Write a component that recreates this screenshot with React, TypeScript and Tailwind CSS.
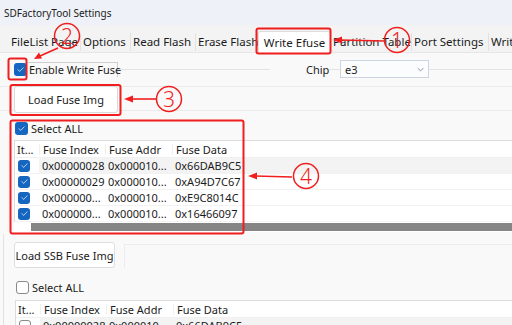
import React from "react";

const tabs = [
  { name: "FileList Page", w: "w-[72px]" },
  { name: "Options", w: "w-[50px]" },
  { name: "Read Flash", w: "w-[65px]" },
  { name: "Erase Flash", w: "w-[62px]" },
  { name: "Write Efuse", w: "w-[73px]", active: true },
  { name: "Partition Table", w: "w-[81px]" },
  { name: "Port Settings", w: "w-[77px]" },
  { name: "Write", w: "w-[60px]" },
];

const fuseRows = [
  ["0x00000028", "0x000010...", "0x66DAB9C5"],
  ["0x00000029", "0x000010...", "0xA94D7C67"],
  ["0x000000...", "0x000010...", "0xE9C8014C"],
  ["0x000000...", "0x000010...", "0x16466097"],
];

function Check({ checked, small }: { checked: boolean; small?: boolean }) {
  const size = small ? "w-[12px] h-[12px]" : "w-[13px] h-[13px]";
  if (!checked) {
    return <span className={`${size} shrink-0 rounded-[3px] border border-[#8a8a8a] bg-white`} />;
  }
  return (
    <span className={`${size} shrink-0 rounded-[3px] bg-[#1466c0] flex items-center justify-center`}>
      <svg viewBox="0 0 12 12" className="w-[9px] h-[9px]">
        <path d="M2.5 6.3 L5 8.5 L9.5 3.8" fill="none" stroke="#dbe8f7" strokeWidth="1.1" strokeLinecap="round" strokeLinejoin="round" />
      </svg>
    </span>
  );
}

function FuseTable({ checked, rows }: { checked: boolean; rows: string[][] }) {
  return (
    <div className="bg-white border-t border-l border-[#dcdcdc] whitespace-nowrap">
      <div className="grid grid-cols-[24px_66px_67px_1fr] h-[17px] items-center border-b border-[#f0f0f0]">
        <span className="pl-[2px]">It...</span>
        <span className="pl-[3px] border-l border-[#f0f0f0]">Fuse Index</span>
        <span className="pl-[3px] border-l border-[#f0f0f0]">Fuse Addr</span>
        <span className="pl-[3px] border-l border-[#f0f0f0]">Fuse Data</span>
      </div>
      {rows.map((r, i) => (
        <div
          key={i}
          className={`grid grid-cols-[24px_66px_67px_1fr] h-[16px] items-center border-b border-[#f2f2f2] ${i === 0 ? "bg-[#f3f3f3]" : ""}`}
        >
          <span className="pl-[3px] h-full flex items-center bg-white">
            <Check checked={checked} small />
          </span>
          <span className="pl-[3px]">{r[0]}</span>
          <span className="pl-[3px]">{r[1]}</span>
          <span className="pl-[3px]">{r[2]}</span>
        </div>
      ))}
    </div>
  );
}

function Annotations() {
  const red = "#f01e1e";
  return (
    <svg className="absolute inset-0 pointer-events-none" width="512" height="325" viewBox="0 0 512 325">
      {/* boxes */}
      <rect x="256.5" y="28.5" width="74" height="25" rx="2" fill="none" stroke={red} strokeWidth="2" />
      <rect x="8.5" y="58.5" width="18" height="21" rx="2" fill="none" stroke={red} strokeWidth="2" />
      <rect x="10.5" y="85" width="110" height="30" rx="2" fill="none" stroke={red} strokeWidth="2" />
      <rect x="10.5" y="120.5" width="233" height="113" rx="2" fill="none" stroke={red} strokeWidth="2" />
      {/* arrows */}
      <line x1="385" y1="41" x2="340" y2="40" stroke={red} strokeWidth="1.6" />
      <polygon points="333,40 342,36.5 342,43.5" fill={red} />
      <line x1="58" y1="48" x2="40" y2="56" stroke={red} strokeWidth="1.6" />
      <polygon points="34,59 39,52.5 42,58.5" fill={red} />
      <line x1="156" y1="99" x2="131" y2="99" stroke={red} strokeWidth="1.6" />
      <polygon points="124,99 133,95.5 133,102.5" fill={red} />
      <line x1="292" y1="177" x2="255" y2="176" stroke={red} strokeWidth="1.6" />
      <polygon points="248,176 257,172.5 257,179.5" fill={red} />
      {/* circled numbers */}
      {[
        { cx: 397, cy: 40, n: "1" },
        { cx: 67, cy: 36, n: "2" },
        { cx: 169, cy: 99, n: "3" },
        { cx: 306, cy: 176, n: "4" },
      ].map((c) => (
        <g key={c.n}>
          <circle cx={c.cx} cy={c.cy} r="12.5" fill="none" stroke={red} strokeWidth="1.5" />
          <text
            x={c.cx}
            y={c.cy + 7.5}
            textAnchor="middle"
            fill={red}
            fontSize="21"
            fontWeight="300"
            fontFamily="'Noto Sans', sans-serif"
          >
            {c.n}
          </text>
        </g>
      ))}
    </svg>
  );
}

export default function App() {
  return (
    <div
      className="relative w-[512px] h-[325px] overflow-hidden bg-[#f9f9f9] text-[11px] leading-none text-[#1b1b1b]"
      style={{ fontFamily: "'Noto Sans', 'Open Sans', sans-serif" }}
    >
      {/* title bar */}
      <div className="h-[25px] bg-[#eef2f8] flex items-center pl-[4px] text-[10px]">SDFactoryTool Settings</div>

      {/* tab strip */}
      <div className="h-[28px] bg-[#f3f3f3] flex items-end pl-[9px] border-b border-[#e6e6e6] whitespace-nowrap text-[11.5px]">
        {tabs.map((t) =>
          t.active ? (
            <div
              key={t.name}
              className={`${t.w} shrink-0 h-[22px] -mb-px bg-white border border-b-0 border-[#dcdcdc] rounded-t-[3px] flex items-center justify-center`}
            >
              {t.name}
            </div>
          ) : (
            <div
              key={t.name}
              className={`${t.w} shrink-0 h-[18px] mb-px border-r border-[#e2e2e2] flex items-center pl-[2px]`}
            >
              {t.name}
            </div>
          )
        )}
      </div>

      {/* content */}
      <div className="pt-[7px]">
        <div className="h-[18px] flex items-center pl-[14px] pr-0 whitespace-nowrap">
          <Check checked />
          <span className="ml-[1px] w-[90px] h-[15px] px-[1px] border-t border-r border-[#cfcfcf] flex items-center">Enable Write Fuse</span>
          <span className="w-[152px] h-px bg-[#e3e3e3]" />
          <span className="ml-[36px] w-[23px]">Chip</span>
          <span className="w-[11px] h-px bg-[#e3e3e3]" />
          <div className="w-[89px] h-[18px] bg-[#fbfcfd] border border-[#ccd6e3] flex items-center justify-between px-[4px]">
            <span>e3</span>
            <svg viewBox="0 0 10 6" className="w-[7px] h-[5px]">
              <path d="M1 1 L5 5 L9 1" fill="none" stroke="#666" strokeWidth="1" />
            </svg>
          </div>
          <span className="flex-1 h-px bg-[#e3e3e3]" />
        </div>

        <div className="mt-[8px] h-[25px] border-y border-[#ebebeb] pl-[14px]">
          <button className="-mt-px w-[104px] h-[27px] bg-white border border-[#d9d9d9] rounded-[3px] flex items-center justify-center">
            Load Fuse Img
          </button>
        </div>

        <div className="mt-[9px] h-[16px] flex items-center gap-[3px] pl-[15px]">
          <Check checked />
          <span>Select ALL</span>
        </div>

        <div className="mt-[4px] pl-[14px]">
          <FuseTable checked rows={fuseRows} />
          <div className="h-[10px] bg-white pl-[17px] pt-px">
            <div className="h-[8px] bg-[#858585]" />
          </div>
        </div>

        <div className="mt-[2px] ml-[3px] border-l border-[#e2e2e2] pl-[10px] pt-[8px]">
          <div className="flex items-end gap-[9px]">
            <button className="w-[101px] h-[26px] shrink-0 bg-white border border-[#dedede] rounded-[3px] flex items-center justify-center whitespace-nowrap">
              Load SSB Fuse Img
            </button>
            <div className="flex-1 h-[24px] bg-[#f9f9f9] border-t border-l border-[#ececec]" />
          </div>
          <div className="mt-[11px] h-[16px] flex items-center gap-[3px] pl-[2px]">
            <Check checked={false} />
            <span>Select ALL</span>
          </div>
          <div className="mt-[5px] pl-px">
            <FuseTable checked={false} rows={fuseRows} />
          </div>
        </div>
      </div>

      <Annotations />
    </div>
  );
}
